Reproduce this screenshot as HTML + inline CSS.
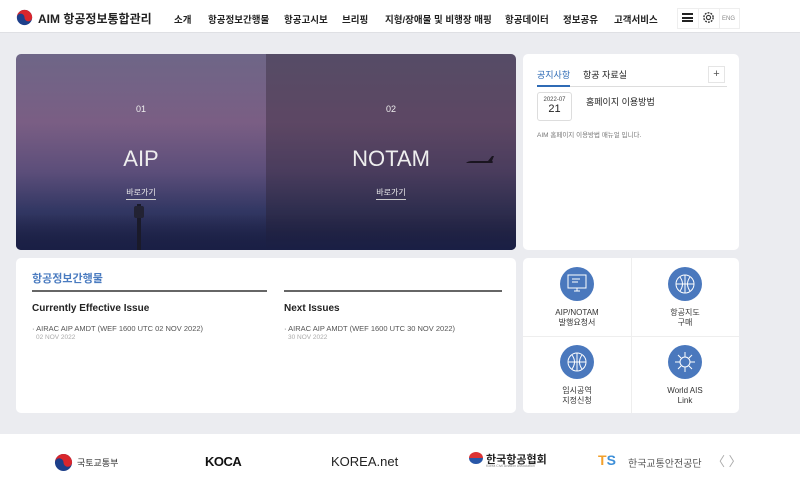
<!DOCTYPE html>
<html><head><meta charset="utf-8"><style>
*{margin:0;padding:0;box-sizing:border-box}
body{width:800px;height:484px;overflow:hidden;background:#ebecf0;font-family:"Liberation Sans","Noto Sans CJK KR",sans-serif;position:relative;color:#222}
.hdr{position:absolute;left:0;top:0;width:800px;height:33px;background:#fff;border-bottom:1px solid #dfe0e4}
.abs{position:absolute}
.nav span{position:absolute;top:12px;font-size:9.5px;font-weight:bold;color:#222;white-space:nowrap}
.card{position:absolute;background:#fff;border-radius:5px}
.hero{position:absolute;left:16px;top:54px;width:500px;height:196px;border-radius:5px;overflow:hidden;background:linear-gradient(180deg,#6e6687 0%,#7a5e84 35%,#5c4e7a 60%,#323763 80%,#1e2244 100%)}
.hero .r{position:absolute;left:250px;top:0;width:250px;height:196px;background:rgba(40,30,40,.35)}
.ht{position:absolute;color:#eee;text-align:center;width:250px}
</style></head><body>
<div class="hdr">
<svg class="abs" style="left:16px;top:9px" width="17" height="17" viewBox="0 0 20 20"><circle cx="10" cy="10" r="9" fill="#1d3f8a"/><path d="M1 10a9 9 0 0 1 18 0a4.5 4.5 0 0 1-9 0a4.5 4.5 0 0 0-9 0z" fill="#d9262c"/></svg>
<div class="abs" style="left:38px;top:10px;font-size:12px;font-weight:bold;color:#222">AIM 항공정보통합관리</div>
<div class="nav">
<span style="left:174px">소개</span><span style="left:208px">항공정보간행물</span><span style="left:284px">항공고시보</span><span style="left:342px">브리핑</span><span style="left:385px">지형/장애물 및 비행장 매핑</span><span style="left:505px">항공데이터</span><span style="left:563px">정보공유</span><span style="left:614px">고객서비스</span>
</div>
<div class="abs" style="left:677px;top:8px;width:63px;height:21px;border:1px solid #eee"></div>
<div class="abs" style="left:698px;top:8px;height:21px;border-left:1px solid #eee"></div>
<div class="abs" style="left:719px;top:8px;height:21px;border-left:1px solid #eee"></div>
<div class="abs" style="left:682px;top:13px;width:11px;height:9px;border-top:2px solid #222;border-bottom:2px solid #222"><div style="margin-top:1.5px;border-top:2px solid #222"></div></div>
<svg class="abs" style="left:702px;top:11px" width="13" height="13" viewBox="0 0 14 14"><circle cx="7" cy="7" r="5" fill="none" stroke="#333" stroke-width="1.5" stroke-dasharray="2 1.2"/><circle cx="7" cy="7" r="2.2" fill="none" stroke="#333" stroke-width="1.2"/></svg>
<div class="abs" style="left:722px;top:16px;font-size:6px;color:#888">ENG</div>
</div>

<div class="hero"><div class="r"></div>
<div class="abs" style="left:0;top:160px;width:500px;height:36px;background:linear-gradient(180deg,rgba(20,25,60,0),#1a1f45)"></div>
<div class="abs" style="left:121px;top:150px;width:4px;height:46px;background:#1a1a2a"></div>
<div class="abs" style="left:118px;top:152px;width:10px;height:12px;background:#222233;border-radius:2px"></div>
<div class="ht" style="left:0;top:50px;font-size:9px">01</div>
<div class="ht" style="left:0;top:92px;font-size:22px">AIP</div>
<div class="ht" style="left:0;top:133px;font-size:8px"><span style="border-bottom:1px solid #ccc;padding-bottom:2px">바로가기</span></div>
<div class="ht" style="left:250px;top:50px;font-size:9px">02</div>
<div class="ht" style="left:250px;top:92px;font-size:22px">NOTAM</div>
<div class="ht" style="left:250px;top:133px;font-size:8px"><span style="border-bottom:1px solid #ccc;padding-bottom:2px">바로가기</span></div>
<svg class="abs" style="left:448px;top:100px" width="32" height="14"><path d="M2 9q2-2 6-2h16l4-5h2l-2 5q2 1 0 2h-22q-3 0-4 0z" fill="#1a1520"/></svg>
</div>

<div class="card" style="left:523px;top:54px;width:216px;height:196px">
<div class="abs" style="left:14px;top:14px;font-size:9px;color:#2f6bb5">공지사항</div>
<div class="abs" style="left:60px;top:14px;font-size:9px;color:#222">항공 자료실</div>
<div class="abs" style="left:14px;top:32px;width:190px;border-top:1px solid #ddd"></div>
<div class="abs" style="left:14px;top:31px;width:33px;border-top:2px solid #2f6bb5"></div>
<div class="abs" style="left:185px;top:12px;width:17px;height:17px;border:1px solid #e5e5e5;font-size:11px;text-align:center;line-height:15px;color:#555">+</div>
<div class="abs" style="left:14px;top:38px;width:35px;height:29px;border:1px solid #ddd;border-radius:3px;text-align:center"><div style="font-size:6px;margin-top:4px;color:#444">2022-07</div><div style="font-size:11px;color:#222">21</div></div>
<div class="abs" style="left:63px;top:41px;font-size:9px;color:#222">홈페이지 이용방법</div>
<div class="abs" style="left:14px;top:75px;font-size:6.5px;color:#777">AIM 홈페이지 이용방법 매뉴얼 입니다.</div>
</div>

<div class="card" style="left:16px;top:258px;width:500px;height:155px">
<div class="abs" style="left:16px;top:12px;font-size:11px;font-weight:bold;color:#4a7bc0">항공정보간행물</div>
<div class="abs" style="left:16px;top:32px;width:235px;border-top:2px solid #666"></div>
<div class="abs" style="left:268px;top:32px;width:218px;border-top:2px solid #666"></div>
<div class="abs" style="left:16px;top:45px;font-size:10px;font-weight:bold">Currently Effective Issue</div>
<div class="abs" style="left:268px;top:45px;font-size:10px;font-weight:bold">Next Issues</div>
<div class="abs" style="left:16px;top:66px;font-size:7.5px;color:#555">· AIRAC AIP AMDT (WEF 1600 UTC 02 NOV 2022)</div>
<div class="abs" style="left:20px;top:76px;font-size:6.5px;color:#aaa">02 NOV 2022</div>
<div class="abs" style="left:268px;top:66px;font-size:7.5px;color:#555">· AIRAC AIP AMDT (WEF 1600 UTC 30 NOV 2022)</div>
<div class="abs" style="left:272px;top:76px;font-size:6.5px;color:#aaa">30 NOV 2022</div>
</div>

<div class="card" style="left:523px;top:258px;width:216px;height:155px">
<div class="abs" style="left:108px;top:0;height:155px;border-left:1px solid #eee"></div>
<div class="abs" style="left:0;top:78px;width:216px;border-top:1px solid #eee"></div>
<div class="abs" style="left:37px;top:9px;width:34px;height:34px;border-radius:50%;background:#4a78bd"></div>
<div class="abs" style="left:145px;top:9px;width:34px;height:34px;border-radius:50%;background:#4a78bd"></div>
<div class="abs" style="left:37px;top:87px;width:34px;height:34px;border-radius:50%;background:#4a78bd"></div>
<div class="abs" style="left:145px;top:87px;width:34px;height:34px;border-radius:50%;background:#4a78bd"></div>
<svg class="abs" style="left:0;top:0" width="216" height="155" fill="none" stroke="#fff" stroke-width="1"><rect x="45" y="17" width="18" height="13"/><path d="M51 33h6M54 30v3M49 21h8M49 24h6"/><circle cx="162" cy="26" r="9"/><path d="M153 26h18M162 17v18M157 19q5 7 0 14M167 19q-5 7 0 14"/><circle cx="54" cy="104" r="9"/><path d="M45 104h18M54 95v18M49 97q5 7 0 14M59 97q-5 7 0 14"/><circle cx="162" cy="104" r="5"/><path d="M162 94v5M162 109v5M152 104h5M167 104h5M155 97l3 3M169 97l-3 3M155 111l3-3M169 111l-3-3"/></svg>
<div class="abs" style="left:0;top:50px;width:108px;text-align:center;font-size:8px;line-height:10px;color:#333">AIP/NOTAM<br>발행요청서</div>
<div class="abs" style="left:108px;top:50px;width:108px;text-align:center;font-size:8px;line-height:10px;color:#333">항공지도<br>구매</div>
<div class="abs" style="left:0;top:128px;width:108px;text-align:center;font-size:8px;line-height:10px;color:#333">임시공역<br>지정신청</div>
<div class="abs" style="left:108px;top:128px;width:108px;text-align:center;font-size:8px;line-height:10px;color:#333">World AIS<br>Link</div>
</div>

<div class="abs" style="left:0;top:434px;width:800px;height:50px;background:#fff">
<svg class="abs" style="left:54px;top:19px" width="19" height="19" viewBox="0 0 20 20"><circle cx="10" cy="10" r="9" fill="#1d3f8a"/><path d="M1 10a9 9 0 0 1 18 0a4.5 4.5 0 0 1-9 0a4.5 4.5 0 0 0-9 0z" fill="#d9262c"/></svg>
<div class="abs" style="left:77px;top:22px;font-size:9px;color:#333">국토교통부</div>
<div class="abs" style="left:205px;top:20px;font-size:13px;font-weight:bold;color:#111;letter-spacing:-0.5px">KOCA</div>
<div class="abs" style="left:331px;top:20px;font-size:13px;color:#222">KOREA.net</div>
<div class="abs" style="left:469px;top:18px;width:14px;height:12px;border-radius:50%;background:linear-gradient(#d33 50%,#2857a8 50%)"></div>
<div class="abs" style="left:486px;top:17px;font-size:11px;font-weight:bold;color:#222">한국항공협회</div>
<div class="abs" style="left:486px;top:30px;font-size:3.5px;color:#888">Korea Civil Aviation Association</div>
<div class="abs" style="left:598px;top:18px;font-size:14px;font-weight:bold;color:#f2a02c">T<span style="color:#3d8fd8">S</span></div>
<div class="abs" style="left:628px;top:21px;font-size:10px;color:#555">한국교통안전공단</div>
<div class="abs" style="left:712px;top:17px;font-size:13px;color:#aaa">〈 〉</div>
</div>
</body></html>
